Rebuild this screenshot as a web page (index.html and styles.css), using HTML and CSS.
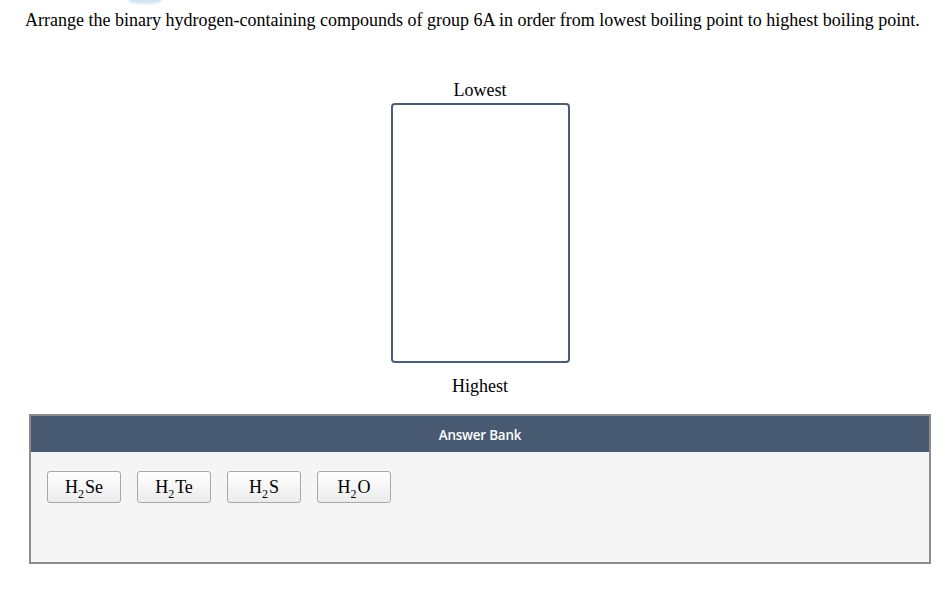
FILE: index.html
```html
<!DOCTYPE html>
<html lang="en">
<head>
    <meta charset="UTF-8">
    <meta name="viewport" content="width=device-width, initial-scale=1.0">
    <title>Boiling Point Ranking</title>
    <link rel="stylesheet" href="styles.css">
</head>
<body>

<div class="glow"></div>

<p class="question">Arrange the binary hydrogen-containing compounds of group 6A in order from lowest boiling point to highest boiling point.</p>

<!-- Ranking target -->
<div class="ranking">
    <div class="rank-label">Lowest</div>
    <div class="drop-box"></div>
    <div class="rank-label">Highest</div>
</div>

<!-- Answer bank -->
<div class="answer-bank">
    <div class="bank-header">Answer Bank</div>
    <div class="bank-items">
        <div class="chip">H<sub>2</sub>Se</div>
        <div class="chip">H<sub>2</sub>Te</div>
        <div class="chip">H<sub>2</sub>S</div>
        <div class="chip">H<sub>2</sub>O</div>
    </div>
</div>

</body>
</html>
```

FILE: styles.css
```css
body { font-family: "Liberation Serif", "Times New Roman", serif; margin: 0; padding: 0 20px 0 29px; color: #000; background: #fff; position: relative; }
.glow { position: absolute; top: -4px; left: 128px; width: 34px; height: 8px; border-radius: 50%; background: #d2e3f0; filter: blur(1px); }
.question { font-size: 18px; margin: 0 0 0 -4px; padding-top: 10px; line-height: 20px; white-space: nowrap; }
.ranking { display: flex; flex-direction: column; align-items: center; margin-top: 50px; width: 902px; }
.rank-label { font-size: 18px; line-height: 20px; }
.drop-box { width: 175px; height: 256px; border: 2px solid #4d5e74; border-radius: 4px; margin: 3px 0 13px 0; }
.answer-bank { width: 898px; margin-top: 18px; border: 2px solid #8c8c8c; background: #f5f5f5; height: 146px; }
.bank-header { background: #475a71; color: #fff; font-family: "Open Sans", sans-serif; font-weight: 600; font-size: 13.4px; text-align: center; height: 36px; line-height: 38px; letter-spacing: -0.2px; }
.bank-items { display: flex; gap: 16px; padding: 19px 0 0 16px; }
.chip { width: 72px; height: 30px; border: 1px solid #a8a8a8; border-radius: 3px; background: linear-gradient(#ffffff, #ececec); font-size: 18px; line-height: 30px; text-align: center; }
.chip sub { font-size: 12px; vertical-align: -5px; line-height: 0; margin-right: 1px; }
```
